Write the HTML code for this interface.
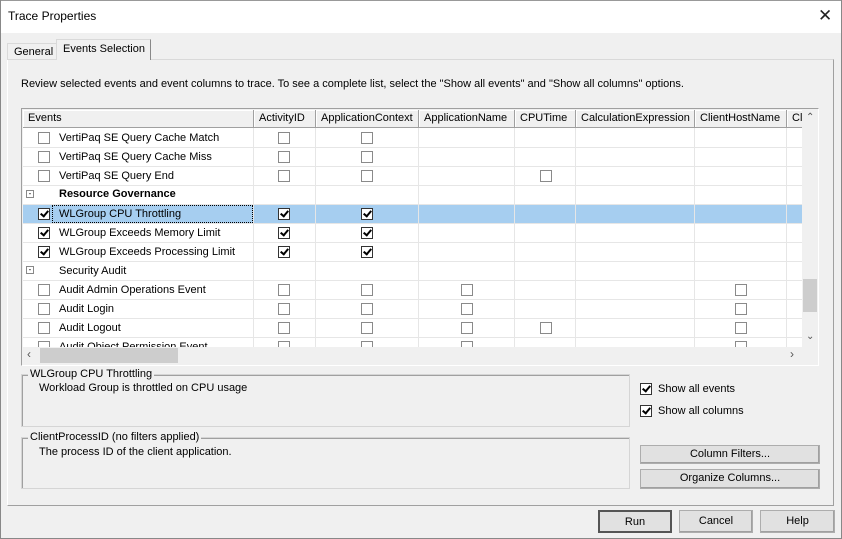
<!DOCTYPE html><html><head><style>
*{box-sizing:border-box}
body{margin:0;width:842px;height:539px;background:#f0f0f0;font-family:"Liberation Sans",sans-serif;font-size:11px;color:#000;position:relative;overflow:hidden}
.a{position:absolute;white-space:nowrap}
.cb{position:absolute;width:12px;height:12px;border:1px solid #8a8a8a;background:#fff}
.cb.on{border-color:#333}
.cb.on::after{content:"";position:absolute;left:3px;top:0px;width:3px;height:6px;border:solid #000;border-width:0 2px 2px 0;transform:rotate(40deg)}
.btn{position:absolute;border:1px solid #adadad;background:#e1e1e1;text-align:center;line-height:17px;box-shadow:inset -1px -1px #a0a0a0}
.hd{position:absolute;top:0;height:18px;border-right:1px solid #a0a0a0;border-bottom:1px solid #a0a0a0;background:#f0f0f0;line-height:17px;padding-left:5px;box-shadow:inset 1px 1px #fff;overflow:hidden}
.vl{position:absolute;top:18px;width:1px;height:240px;background:#e6e6e6}
.hl{position:absolute;left:0;width:780px;height:1px;background:#e6e6e6}
</style></head><body>
<div class="a" style="left:0;top:0;width:842px;height:33px;background:#fff;border-top:1px solid #999"></div>
<div class="a" style="left:8px;top:9px;font-size:12px">Trace Properties</div>
<div class="a" style="left:818px;top:6px;font-size:17px;font-weight:100;color:#222">✕</div>
<div class="a" style="left:0;top:0;width:842px;height:539px;border:1px solid #888;border-top:none"></div>
<!-- tab panel -->
<div class="a" style="left:7px;top:59px;width:827px;height:447px;border:1px solid #d9d9d9;border-right-color:#a0a0a0;border-bottom-color:#a0a0a0;border-left-color:#fff"></div>
<div class="a" style="left:7px;top:43px;width:50px;height:17px;border:1px solid #d9d9d9;border-bottom:none;padding:2px 0 0 6px">General</div>
<div class="a" style="left:56px;top:39px;width:95px;height:21px;border:1px solid #d9d9d9;border-right-color:#888;border-bottom:none;background:#f0f0f0;padding:3px 0 0 6px">Events Selection</div>
<div class="a" style="left:21px;top:78px">Review selected events and event columns to trace. To see a complete list, select the "Show all events" and "Show all columns" options.</div>
<!-- grid -->
<div class="a" style="left:21px;top:108px;width:798px;height:258px;border:1px solid #a0a0a0;border-right-color:#fff;border-bottom-color:#fff;background:#f0f0f0"></div>
<div class="a" style="left:23px;top:110px;width:779px;height:237px;background:#fff;overflow:hidden">
<div class="hl" style="top:37px"></div><div class="hl" style="top:56px"></div><div class="hl" style="top:75px"></div><div class="hl" style="top:94px"></div><div class="hl" style="top:113px"></div><div class="hl" style="top:132px"></div><div class="hl" style="top:151px"></div><div class="hl" style="top:170px"></div><div class="hl" style="top:189px"></div><div class="hl" style="top:208px"></div><div class="hl" style="top:227px"></div>
<div class="a" style="left:0;top:95px;width:780px;height:18px;background:#a6cef0"></div>
<div class="vl" style="left:230px"></div><div class="vl" style="left:292px"></div><div class="vl" style="left:395px"></div><div class="vl" style="left:491px"></div><div class="vl" style="left:552px"></div><div class="vl" style="left:671px"></div><div class="vl" style="left:763px"></div>
<div class="hd" style="left:0;width:231px">Events</div>
<div class="hd" style="left:231px;width:62px">ActivityID</div>
<div class="hd" style="left:293px;width:103px">ApplicationContext</div>
<div class="hd" style="left:396px;width:96px">ApplicationName</div>
<div class="hd" style="left:492px;width:61px">CPUTime</div>
<div class="hd" style="left:553px;width:119px">CalculationExpression</div>
<div class="hd" style="left:672px;width:92px">ClientHostName</div>
<div class="hd" style="left:764px;width:40px">Cli</div>
<div class="a" style="left:3px;top:80px;width:8px;height:8px;border:1px solid #888;font-size:8px;line-height:5px;text-align:center">-</div>
<div class="a" style="left:3px;top:156px;width:8px;height:8px;border:1px solid #888;font-size:8px;line-height:5px;text-align:center">-</div>
<div class="a" style="left:36px;top:22px">VertiPaq SE Query Cache Match</div>
<div class="a" style="left:36px;top:41px">VertiPaq SE Query Cache Miss</div>
<div class="a" style="left:36px;top:60px">VertiPaq SE Query End</div>
<div class="a" style="left:36px;top:78px;font-weight:bold">Resource Governance</div>
<div class="a" style="left:29px;top:95px;width:201px;height:18px;border:1px dotted #000"></div>
<div class="a" style="left:36px;top:98px">WLGroup CPU Throttling</div>
<div class="a" style="left:36px;top:117px">WLGroup Exceeds Memory Limit</div>
<div class="a" style="left:36px;top:136px">WLGroup Exceeds Processing Limit</div>
<div class="a" style="left:36px;top:155px">Security Audit</div>
<div class="a" style="left:36px;top:174px">Audit Admin Operations Event</div>
<div class="a" style="left:36px;top:193px">Audit Login</div>
<div class="a" style="left:36px;top:212px">Audit Logout</div>
<div class="a" style="left:36px;top:231px">Audit Object Permission Event</div>
<div class="cb" style="left:15px;top:22px"></div><div class="cb" style="left:255px;top:22px"></div><div class="cb" style="left:338px;top:22px"></div>
<div class="cb" style="left:15px;top:41px"></div><div class="cb" style="left:255px;top:41px"></div><div class="cb" style="left:338px;top:41px"></div>
<div class="cb" style="left:15px;top:60px"></div><div class="cb" style="left:255px;top:60px"></div><div class="cb" style="left:338px;top:60px"></div><div class="cb" style="left:517px;top:60px"></div>
<div class="cb on" style="left:15px;top:98px"></div><div class="cb on" style="left:255px;top:98px"></div><div class="cb on" style="left:338px;top:98px"></div>
<div class="cb on" style="left:15px;top:117px"></div><div class="cb on" style="left:255px;top:117px"></div><div class="cb on" style="left:338px;top:117px"></div>
<div class="cb on" style="left:15px;top:136px"></div><div class="cb on" style="left:255px;top:136px"></div><div class="cb on" style="left:338px;top:136px"></div>
<div class="cb" style="left:15px;top:174px"></div><div class="cb" style="left:255px;top:174px"></div><div class="cb" style="left:338px;top:174px"></div><div class="cb" style="left:438px;top:174px"></div><div class="cb" style="left:712px;top:174px"></div>
<div class="cb" style="left:15px;top:193px"></div><div class="cb" style="left:255px;top:193px"></div><div class="cb" style="left:338px;top:193px"></div><div class="cb" style="left:438px;top:193px"></div><div class="cb" style="left:712px;top:193px"></div>
<div class="cb" style="left:15px;top:212px"></div><div class="cb" style="left:255px;top:212px"></div><div class="cb" style="left:338px;top:212px"></div><div class="cb" style="left:438px;top:212px"></div><div class="cb" style="left:517px;top:212px"></div><div class="cb" style="left:712px;top:212px"></div>
<div class="cb" style="left:15px;top:231px"></div><div class="cb" style="left:255px;top:231px"></div><div class="cb" style="left:338px;top:231px"></div><div class="cb" style="left:438px;top:231px"></div><div class="cb" style="left:712px;top:231px"></div>
</div>
<!-- scrollbars -->
<div class="a" style="left:802px;top:110px;width:16px;height:237px;background:#f0f0f0"></div>
<div class="a" style="left:803px;top:279px;width:14px;height:33px;background:#cdcdcd"></div>
<div class="a" style="left:806px;top:112px;font-size:10px;color:#555">&#8963;</div>
<div class="a" style="left:806px;top:331px;font-size:10px;color:#555">&#8964;</div>
<div class="a" style="left:23px;top:347px;width:779px;height:17px;background:#f0f0f0"></div>
<div class="a" style="left:40px;top:348px;width:138px;height:15px;background:#cdcdcd"></div>
<div class="a" style="left:27px;top:347px;font-size:12px;color:#555">‹</div>
<div class="a" style="left:790px;top:347px;font-size:12px;color:#555">›</div>
<!-- group boxes -->
<div class="a" style="left:21px;top:374px;width:609px;height:53px;border:1px solid #d5d5d5;box-shadow:inset 1px 1px #a0a0a0"></div>
<div class="a" style="left:28px;top:368px;background:#f0f0f0;padding:0 2px">WLGroup CPU Throttling</div>
<div class="a" style="left:39px;top:382px">Workload Group is throttled on CPU usage</div>
<div class="a" style="left:21px;top:437px;width:609px;height:52px;border:1px solid #d5d5d5;box-shadow:inset 1px 1px #a0a0a0"></div>
<div class="a" style="left:28px;top:431px;background:#f0f0f0;padding:0 2px">ClientProcessID (no filters applied)</div>
<div class="a" style="left:39px;top:446px">The process ID of the client application.</div>
<div class="cb on" style="left:640px;top:383px"></div><div class="a" style="left:658px;top:383px">Show all events</div>
<div class="cb on" style="left:640px;top:405px"></div><div class="a" style="left:658px;top:405px">Show all columns</div>
<div class="btn" style="left:640px;top:445px;width:180px;height:19px">Column Filters...</div>
<div class="btn" style="left:640px;top:469px;width:180px;height:20px">Organize Columns...</div>
<div class="btn" style="left:598px;top:510px;width:74px;height:23px;line-height:21px;border:2px solid #555;box-shadow:none">Run</div>
<div class="btn" style="left:679px;top:510px;width:74px;height:23px;line-height:21px">Cancel</div>
<div class="btn" style="left:760px;top:510px;width:75px;height:23px;line-height:21px">Help</div>
</body></html>
